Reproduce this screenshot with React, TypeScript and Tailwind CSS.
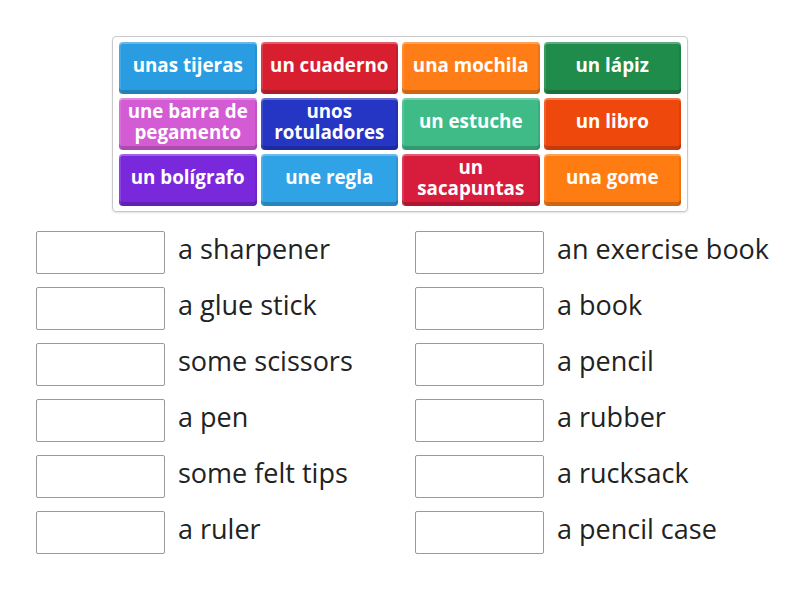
const tiles: { label: string; color: string }[] = [
  { label: 'unas tijeras', color: 'bg-[#2a9de2]' },
  { label: 'un cuaderno', color: 'bg-[#d71f30]' },
  { label: 'una mochila', color: 'bg-[#ff7d16]' },
  { label: 'un lápiz', color: 'bg-[#1f8c4b]' },
  { label: 'une barra de pegamento', color: 'bg-[#d35bd4]' },
  { label: 'unos rotuladores', color: 'bg-[#2535c4]' },
  { label: 'un estuche', color: 'bg-[#3fbb88]' },
  { label: 'un libro', color: 'bg-[#ef480c]' },
  { label: 'un bolígrafo', color: 'bg-[#7a28dc]' },
  { label: 'une regla', color: 'bg-[#2fa3e6]' },
  { label: 'un sacapuntas', color: 'bg-[#d81c3c]' },
  { label: 'una gome', color: 'bg-[#ff7c12]' },
];

const left = ['a sharpener', 'a glue stick', 'some scissors', 'a pen', 'some felt tips', 'a ruler'];
const right = ['an exercise book', 'a book', 'a pencil', 'a rubber', 'a rucksack', 'a pencil case'];

function Slot({ text }: { text: string }) {
  return (
    <div className="flex items-center h-[42px]">
      <div className="w-[129px] h-[43px] border border-[#9a9a9a] rounded-[2px] bg-white shrink-0" />
      <span className="ml-[13px] text-[27px] text-[#222] leading-none -mt-[7px]">{text}</span>
    </div>
  );
}

export default function App() {
  return (
    <div className="w-[800px] h-[600px] bg-white font-['Open_Sans',sans-serif]">
      <div className="pt-[36px] flex justify-center">
        <div className="w-[576px] px-[6px] py-[5px] border border-[#c8c8c8] rounded-[4px] shadow-[0_1px_2px_rgba(0,0,0,0.12)] grid grid-cols-4 gap-[4px]">
          {tiles.map((t) => (
            <div
              key={t.label}
              className={`${t.color} h-[52px] rounded-[4px] flex items-center justify-center text-center px-1 text-white font-bold text-[18.8px] leading-[21px] shadow-[inset_0_2px_0_rgba(255,255,255,0.28),inset_0_-4px_0_rgba(0,0,0,0.18),inset_2px_0_0_rgba(255,255,255,0.12),inset_-2px_0_0_rgba(0,0,0,0.08)]`}
            >
              <span className="-mt-[5px]">{t.label}</span>
            </div>
          ))}
        </div>
      </div>
      <div className="mt-[19px] pl-[36px] grid grid-cols-[379px_1fr]">
        <div className="flex flex-col gap-[14px]">
          {left.map((l) => (
            <Slot key={l} text={l} />
          ))}
        </div>
        <div className="flex flex-col gap-[14px]">
          {right.map((r) => (
            <Slot key={r} text={r} />
          ))}
        </div>
      </div>
    </div>
  );
}
